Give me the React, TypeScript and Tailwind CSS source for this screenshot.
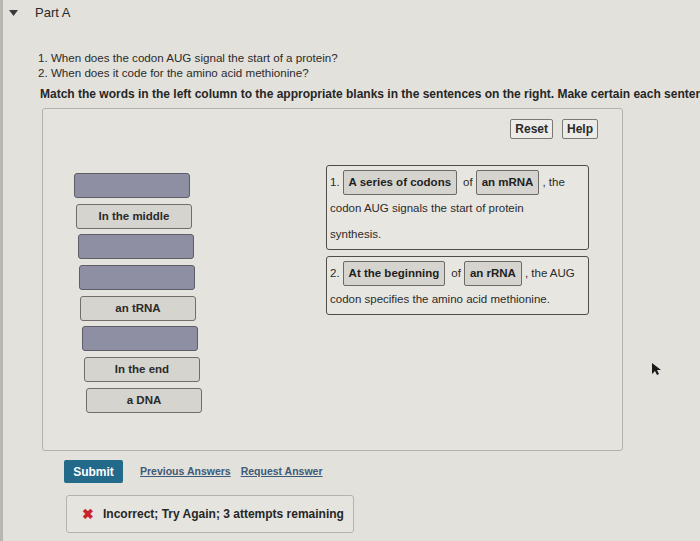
import React from "react";

const items: { label: string; ml: string }[] = [
  { label: "", ml: "ml-[0px]" },
  { label: "In the middle", ml: "ml-[2px]" },
  { label: "", ml: "ml-[4px]" },
  { label: "", ml: "ml-[5px]" },
  { label: "an tRNA", ml: "ml-[6px]" },
  { label: "", ml: "ml-[8px]" },
  { label: "In the end", ml: "ml-[10px]" },
  { label: "a DNA", ml: "ml-[12px]" },
];

function Drop({ children }: { children: React.ReactNode }) {
  return (
    <span className="inline-flex items-center h-[25px] px-[5px] mx-[3px] bg-[#d6d4cf] border border-[#6b6a66] rounded-[2px] font-bold text-[11.5px] text-[#1e1e1e] align-middle">
      {children}
    </span>
  );
}

export default function App() {
  return (
    <div
      className="w-[700px] h-[541px] overflow-hidden bg-[#e3e1db] text-[#262626] relative"
      style={{ fontFamily: '"Liberation Sans", Arial, sans-serif' }}
    >
      <div className="absolute left-0 top-0 h-full w-[3px] bg-[#b9b7b2]" />
      <div className="flex items-center pt-[3px] pl-[9px] h-[22px]">
        <svg width="9" height="7" viewBox="0 0 9 7" className="mt-[2px]">
          <polygon points="0,0 9,0 4.5,6" fill="#3a3a3a" />
        </svg>
        <span className="ml-[17px] text-[13px] text-[#2a2a2a]">Part A</span>
      </div>

      <div className="pl-[38px] pt-[28px] text-[11.6px] leading-[15px] text-[#2b2b2b]">
        <div>1. When does the codon AUG signal the start of a protein?</div>
        <div>2. When does it code for the amino acid methionine?</div>
      </div>
      <div className="pl-[40px] pt-[6px] text-[12px] leading-[16px] font-bold whitespace-nowrap text-[#262626]">
        Match the words in the left column to the appropriate blanks in the sentences on the right. Make certain each sentence is complete before submitting.
      </div>

      <div className="ml-[42px] mt-[6px] w-[581px] h-[343px] border border-[#b3b1ac] rounded-[3px] bg-[#e5e3de] relative">
        <div className="flex justify-end gap-[9px] pr-[24px] pt-[10px]">
          <button className="h-[20px] px-[4px] border border-[#7a7975] bg-[#ecebe7] rounded-[2px] text-[12px] font-bold text-[#2a2a2a]">
            Reset
          </button>
          <button className="h-[20px] px-[4px] border border-[#7a7975] bg-[#ecebe7] rounded-[2px] text-[12px] font-bold text-[#2a2a2a]">
            Help
          </button>
        </div>

        <div className="flex">
          <div className="flex flex-col gap-[5.7px] ml-[31px] mt-[34px] w-[128px]">
            {items.map((it, i) =>
              it.label ? (
                <div
                  key={i}
                  className={`${it.ml} w-[116px] h-[25px] flex items-center justify-center border border-[#6f6e6a] rounded-[3px] bg-[#d6d4cf] text-[11.5px] font-bold text-[#2a2a2a]`}
                >
                  {it.label}
                </div>
              ) : (
                <div
                  key={i}
                  className={`${it.ml} w-[116px] h-[25px] border border-[#5e5d6a] rounded-[3px] bg-[#8f8fa4]`}
                />
              )
            )}
          </div>

          <div className="ml-[124px] mt-[26px] w-[263px] flex flex-col gap-[6px]">
            <div className="border border-[#4e4d4a] rounded-[3px] bg-[#e8e6e1] px-[3px] pt-[3px] pb-[2px] text-[11.5px] leading-[26px] text-[#2b2b2b]">
              <div className="flex items-center">
                <span>1.</span>
                <Drop>A series of codons</Drop>
                <span className="ml-[3px]">of</span>
                <Drop>an mRNA</Drop>
                <span>, the</span>
              </div>
              <div>codon AUG signals the start of protein</div>
              <div>synthesis.</div>
            </div>
            <div className="border border-[#4e4d4a] rounded-[3px] bg-[#e8e6e1] px-[3px] pt-[3px] pb-[2px] text-[11.5px] leading-[26px] text-[#2b2b2b]">
              <div className="flex items-center">
                <span>2.</span>
                <Drop>At the beginning</Drop>
                <span className="ml-[3px]">of</span>
                <Drop>an rRNA</Drop>
                <span>, the AUG</span>
              </div>
              <div>codon specifies the amino acid methionine.</div>
            </div>
          </div>
        </div>
      </div>

      <div className="flex items-center ml-[64px] mt-[9px]">
        <button className="w-[59px] h-[23px] bg-[#23698a] text-white text-[12px] font-bold rounded-[2px]">
          Submit
        </button>
        <span className="ml-[17px] text-[10.5px] font-bold text-[#3e5a78] underline">Previous Answers</span>
        <span className="ml-[10px] text-[10.5px] font-bold text-[#3e5a78] underline">Request Answer</span>
      </div>

      <div className="ml-[66px] mt-[12px] w-[288px] h-[38px] border border-[#b5b3ae] rounded-[3px] bg-[#e6e4df] flex items-center pl-[15px] whitespace-nowrap">
        <span className="text-[#c8242b] font-bold text-[14px] leading-none">✖</span>
        <span className="ml-[9px] text-[12px] font-bold text-[#262626]">
          Incorrect; Try Again; 3 attempts remaining
        </span>
      </div>

      <svg
        className="absolute left-[651px] top-[362px]"
        width="12"
        height="14"
        viewBox="0 0 12 14"
      >
        <polygon points="1,1 1,12 4,9 6,13 8,12 6,8 10,8" fill="#1a1a1a" />
      </svg>
    </div>
  );
}
